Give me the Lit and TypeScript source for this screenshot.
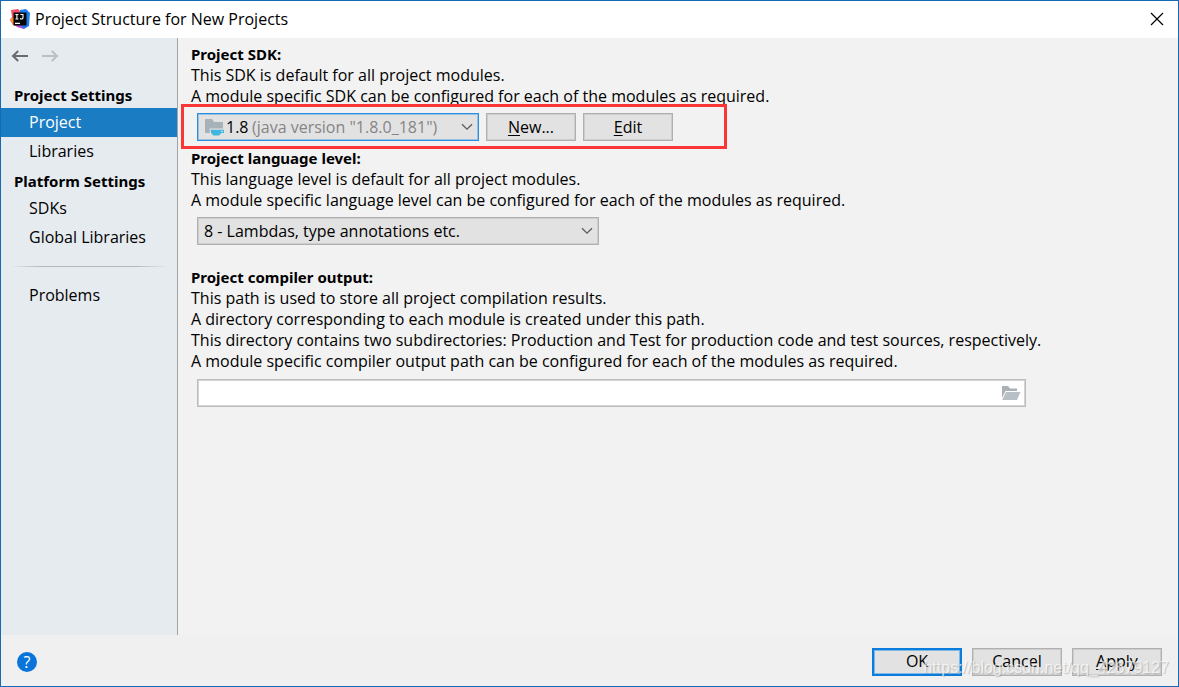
import { LitElement, html, css, svg } from "lit";
import { customElement, state } from "lit/decorators.js";

const chevron = html`<svg class="chevron" viewBox="0 0 12 8" width="12" height="8" aria-hidden="true">
  <path d="M1 1.2 L6 6.2 L11 1.2" fill="none" stroke="#5c5c5c" stroke-width="1.3" />
</svg>`;

const arrow = svg`<path d="M18 7 H3 M8.2 2 L3 7 L8.2 12" fill="none" stroke="currentColor" stroke-width="2" />`;

@customElement("app-root")
export class AppRoot extends LitElement {
  static styles = css`
    :host {
      display: block;
      font-family: "Open Sans", "Noto Sans", sans-serif;
      font-size: 16px;
      color: #000;
    }
    * {
      box-sizing: border-box;
    }
    .window {
      position: relative;
      display: flex;
      flex-direction: column;
      min-height: 100vh;
      border: 1px solid #1769b1;
      background: #f0f0f0;
    }
    .titlebar {
      display: flex;
      align-items: center;
      gap: 5px;
      height: 37px;
      padding: 0 14px 1px 9px;
      background: #fff;
    }
    .title {
      flex: 1;
      margin: 0;
      font-size: 16px;
      font-weight: 400;
    }
    .icon-button {
      display: flex;
      padding: 0;
      border: 0;
      background: none;
      color: #6b6b6b;
    }
    .icon-button:disabled {
      color: #bcbec0;
    }
    .icon-button.forward svg {
      transform: scaleX(-1);
    }
    .body {
      flex: 1;
      display: flex;
    }
    .sidebar {
      flex: none;
      width: 177px;
      border-right: 1px solid #a2a5a8;
      background: #e6ebf0;
    }
    .history {
      display: flex;
      gap: 14px;
      padding: 11px 9px 17px;
    }
    .group {
      margin: 0;
      padding: 2px 0 0 13px;
      font-family: "Noto Sans", sans-serif;
      font-size: 15px;
      font-weight: 700;
      line-height: 26px;
    }
    .item {
      display: block;
      padding-left: 28px;
      line-height: 29px;
      color: #000;
      text-decoration: none;
    }
    .item.selected {
      background: #1a7dc4;
      color: #fff;
    }
    .divider {
      height: 1px;
      margin: 14px 9px;
      border: 0;
      background: linear-gradient(90deg, transparent, #b4b8bb 20%, #b4b8bb 80%, transparent);
    }
    .content {
      flex: 1;
      padding: 5px 13px;
      background: #f2f2f2;
    }
    .section {
      margin-bottom: 21px;
    }
    .section.tight {
      margin-bottom: 6px;
    }
    .heading {
      margin: 0;
      font-family: "Noto Sans", sans-serif;
      font-size: 15px;
      font-weight: 700;
      line-height: 22px;
    }
    .text {
      margin: 0;
      line-height: 21px;
    }
    .row {
      position: relative;
      display: flex;
      gap: 7px;
      width: fit-content;
      margin: 6px 0 0 6px;
    }
    .marker {
      position: absolute;
      inset: -9px -54px -8px -16px;
      border: 3px solid #fb3636;
      pointer-events: none;
    }
    .combo {
      position: relative;
      display: flex;
      align-items: center;
      width: 402px;
      height: 28px;
    }
    .combo.sdk {
      width: 282px;
    }
    .select {
      appearance: none;
      width: 100%;
      height: 28px;
      padding: 0 24px 0 6px;
      border: 1px solid #b0b0b0;
      box-shadow: inset 0 0 0 1px #cdcdcd;
      border-radius: 0;
      background: #e2e2e2;
      font: inherit;
      color: #000;
    }
    .sdk .select {
      padding-left: 28px;
      border-color: #2b8ddb;
      box-shadow: inset 0 0 0 1px #96c2e4;
    }
    .overlay {
      position: absolute;
      left: 8px;
      right: 6px;
      display: flex;
      align-items: center;
      pointer-events: none;
    }
    .detail {
      margin-left: 27px;
      color: #858585;
    }
    .chevron {
      margin-left: auto;
    }
    .button {
      width: 90px;
      height: 28px;
      padding: 0 0 1px;
      border: 1px solid #b0b0b0;
      box-shadow: inset 0 0 0 1px #cdcdcd;
      background: #e2e2e2;
      font: inherit;
      color: #000;
    }
    .button.primary {
      border: 2px solid #0a7ddc;
      box-shadow: inset 0 0 0 1px #7db8e6;
    }
    .mnemonic {
      text-decoration: underline;
      text-underline-offset: 2px;
    }
    .path {
      display: flex;
      align-items: center;
      max-width: 829px;
      height: 28px;
      margin: 7px 0 0 6px;
      padding-right: 4px;
      border: 1px solid #bdbdbd;
      box-shadow: inset 0 0 0 1px #d4d4d4;
      background: #fff;
    }
    .path-input {
      flex: 1;
      min-width: 0;
      height: 24px;
      border: 0;
      outline: 0;
      background: none;
      font: inherit;
    }
    .footer {
      display: flex;
      align-items: center;
      gap: 10px;
      height: 51px;
      padding: 2px 16px 0;
    }
    .help {
      margin-right: auto;
      padding: 0;
      width: 20px;
      height: 20px;
      border: 0;
      border-radius: 50%;
      background: #0a74da;
      color: #fff;
      font: inherit;
      line-height: 20px;
    }
    .watermark {
      position: absolute;
      right: 9px;
      bottom: 9px;
      font-family: "Liberation Sans", sans-serif;
      font-size: 16px;
      line-height: 18px;
      color: rgba(255, 255, 255, 0.7);
      text-shadow: 1px 1px 1px rgba(120, 120, 120, 0.4);
      pointer-events: none;
    }
  `;

  @state() private page = "Project";

  private item(name: string) {
    return html`<a
      class="item ${this.page === name ? "selected" : ""}"
      href="#"
      @click=${(e: Event) => {
        e.preventDefault();
        this.page = name;
      }}
      >${name}</a
    >`;
  }

  render() {
    return html`
      <div class="window">
        <header class="titlebar">
          <svg width="20" height="20" viewBox="0 0 20 20" aria-hidden="true">
            <path d="M1 1 L8 0 L11 3 L9 17 L3 16 L0 11 L2 8 Z" fill="#f0506a" />
            <path d="M0 10 L5 8 L8 17 L3 16 Z" fill="#f9903a" />
            <path d="M10 1 L16 0 L20 4 L19 17 L14 20 L8 17 Z" fill="#1c7cf0" />
            <path d="M3 14 L10 15 L14 20 L7 18 Z" fill="#b44cd0" />
            <rect x="3.5" y="3.5" width="13" height="13" fill="#080808" />
            <path
              d="M5.4 5.5 H8.4 M6.9 5.5 V10 M5.4 10 H8.4 M10.4 5.5 H13 V8.8 Q12.8 10.2 11.4 10 L10 9.6 M5 14.4 H10"
              fill="none"
              stroke="#fff"
              stroke-width="1.1"
            />
          </svg>
          <h1 class="title">Project Structure for New Projects</h1>
          <button class="icon-button" aria-label="Close">
            <svg width="14" height="14" viewBox="0 0 14 14">
              <path d="M1 1 L13 13 M13 1 L1 13" stroke="#000" stroke-width="1.2" />
            </svg>
          </button>
        </header>

        <div class="body">
          <nav class="sidebar">
            <div class="history">
              <button class="icon-button" aria-label="Back">
                <svg width="18" height="14" viewBox="0 0 18 14">${arrow}</svg>
              </button>
              <button class="icon-button forward" aria-label="Forward" disabled>
                <svg width="18" height="14" viewBox="0 0 18 14">${arrow}</svg>
              </button>
            </div>
            <h2 class="group">Project Settings</h2>
            ${this.item("Project")} ${this.item("Libraries")}
            <h2 class="group">Platform Settings</h2>
            ${this.item("SDKs")} ${this.item("Global Libraries")}
            <hr class="divider" />
            ${this.item("Problems")}
          </nav>

          <main class="content">
            <section class="section tight">
              <h2 class="heading" id="sdk-label">Project SDK:</h2>
              <p class="text">This SDK is default for all project modules.</p>
              <p class="text">A module specific SDK can be configured for each of the modules as required.</p>
              <div class="row">
                <div class="combo sdk">
                  <select class="select" aria-labelledby="sdk-label">
                    <option>1.8</option>
                  </select>
                  <div class="overlay">
                    <svg width="20" height="18" viewBox="0 0 20 18" aria-hidden="true">
                      <path d="M0 1 H7 L9 4 H18 V15 H0 Z" fill="#a7b1b8" />
                      <path d="M4.5 10.5 H19.5 V14 H16.5 Q16 16 14.5 18 H5 Z" fill="#e2e2e2" />
                      <path
                        d="M5.5 11.8 H19 V15 H16 Q15.4 16.6 14 17.6 H8.5 Q5.8 16 5.5 11.8 Z M16.4 12.8 V14 H17.9 V12.8 Z"
                        fill="#40b6e0"
                        fill-rule="evenodd"
                      />
                    </svg>
                    <span class="detail">(java version "1.8.0_181")</span>
                    ${chevron}
                  </div>
                </div>
                <button class="button"><span class="mnemonic">N</span>ew...</button>
                <button class="button"><span class="mnemonic">E</span>dit</button>
                <div class="marker"></div>
              </div>
            </section>

            <section class="section">
              <h2 class="heading" id="level-label">Project language level:</h2>
              <p class="text">This language level is default for all project modules.</p>
              <p class="text">A module specific language level can be configured for each of the modules as required.</p>
              <div class="row">
                <div class="combo">
                  <select class="select" aria-labelledby="level-label">
                    <option>8 - Lambdas, type annotations etc.</option>
                  </select>
                  <div class="overlay">${chevron}</div>
                </div>
              </div>
            </section>

            <section>
              <h2 class="heading" id="output-label">Project compiler output:</h2>
              <p class="text">This path is used to store all project compilation results.</p>
              <p class="text">A directory corresponding to each module is created under this path.</p>
              <p class="text">
                This directory contains two subdirectories: Production and Test for production code and test sources,
                respectively.
              </p>
              <p class="text">A module specific compiler output path can be configured for each of the modules as required.</p>
              <div class="path">
                <input class="path-input" type="text" aria-labelledby="output-label" />
                <button class="icon-button" aria-label="Browse">
                  <svg width="20" height="16" viewBox="0 0 20 16">
                    <path d="M1 1 H7 L9 3.5 H16 V6 H4.5 L1 13 Z" fill="#aab2b8" />
                    <path d="M5 7 H19.5 L16 15 H1.2 Z" fill="#b9c0c5" />
                  </svg>
                </button>
              </div>
            </section>
          </main>
        </div>

        <footer class="footer">
          <button class="help" aria-label="Help">?</button>
          <button class="button primary">OK</button>
          <button class="button">Cancel</button>
          <button class="button"><span class="mnemonic">A</span>pply</button>
        </footer>
        <div class="watermark">https://blog.csdn.net/qq_42679127</div>
      </div>
    `;
  }
}
